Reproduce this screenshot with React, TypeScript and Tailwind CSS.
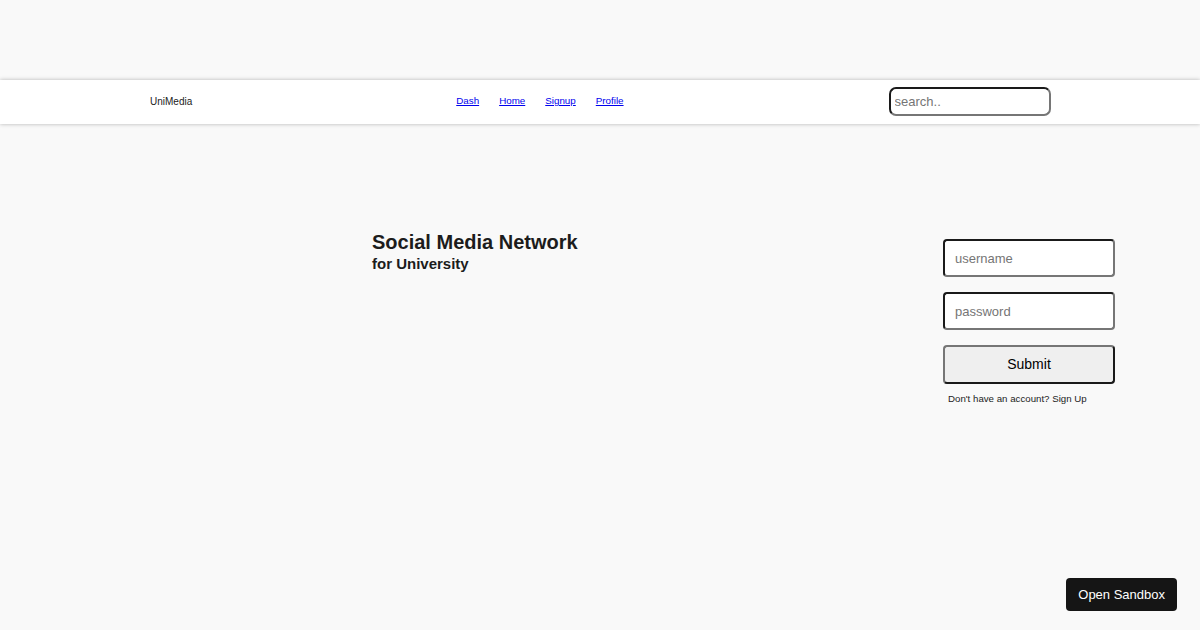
import React from 'react';

const App = () => {
  return (
    <div className="min-h-[630px] bg-[#f9f9f9] pt-[80px] font-['Liberation_Sans',Arial,sans-serif] text-[#1c1c1c]">
      {/* Navbar */}
      <header className="h-[44px] pb-[2px] bg-white shadow-[0_0_4px_rgba(0,0,0,0.28)] flex items-center">
        <span className="ml-[150px] text-[10px] text-[#222]">UniMedia</span>
        <nav className="ml-[264px] flex items-center gap-[20px] text-[9.8px]">
          <a href="#" className="text-[#0000ee] underline">Dash</a>
          <a href="#" className="text-[#0000ee] underline">Home</a>
          <a href="#" className="text-[#0000ee] underline">Signup</a>
          <a href="#" className="text-[#0000ee] underline">Profile</a>
        </nav>
        <input
          placeholder="search.."
          className="ml-[265px] mt-[1px] w-[162px] h-[29px] rounded-[7px] bg-white border-2 border-t-[#1a1a1a] border-l-[#1a1a1a] border-r-[#767676] border-b-[#767676] px-[4px] text-[13px] placeholder:text-[#757575] outline-none"
        />
      </header>

      {/* Main */}
      <main className="flex items-start pt-[106px]">
        <div className="ml-[372px]">
          <h1 className="text-[20px] leading-[24px] font-bold text-[#1c1c1c]">Social Media Network</h1>
          <h2 className="mt-[1px] text-[15px] leading-[18px] font-bold text-[#1c1c1c]">for University</h2>
        </div>

        <form className="ml-auto mr-[85px] mt-[9px] w-[172px] flex flex-col gap-[15px]" onSubmit={e => e.preventDefault()}>
          <input
            placeholder="username"
            className="h-[38px] rounded-[4px] bg-white border-2 border-t-[#1a1a1a] border-l-[#1a1a1a] border-r-[#767676] border-b-[#767676] px-[10px] text-[13px] placeholder:text-[#757575] outline-none"
          />
          <input
            type="password"
            placeholder="password"
            className="h-[38px] rounded-[4px] bg-white border-2 border-t-[#1a1a1a] border-l-[#1a1a1a] border-r-[#767676] border-b-[#767676] px-[10px] text-[13px] placeholder:text-[#757575] outline-none"
          />
          <button
            type="submit"
            className="h-[39px] rounded-[4px] bg-[#efefef] border-2 border-t-[#767676] border-l-[#767676] border-r-[#1a1a1a] border-b-[#1a1a1a] text-[14px] text-black"
          >
            Submit
          </button>
          <p className="-mt-[7px] pl-[5px] text-[9.7px] text-[#222]">Don't have an account? Sign Up</p>
        </form>
      </main>

      {/* Sandbox button */}
      <button className="fixed right-[23px] bottom-[19px] h-[33px] px-[12px] rounded-[4px] bg-[#151515] text-white text-[13px]">
        Open Sandbox
      </button>
    </div>
  );
};

export default App;
